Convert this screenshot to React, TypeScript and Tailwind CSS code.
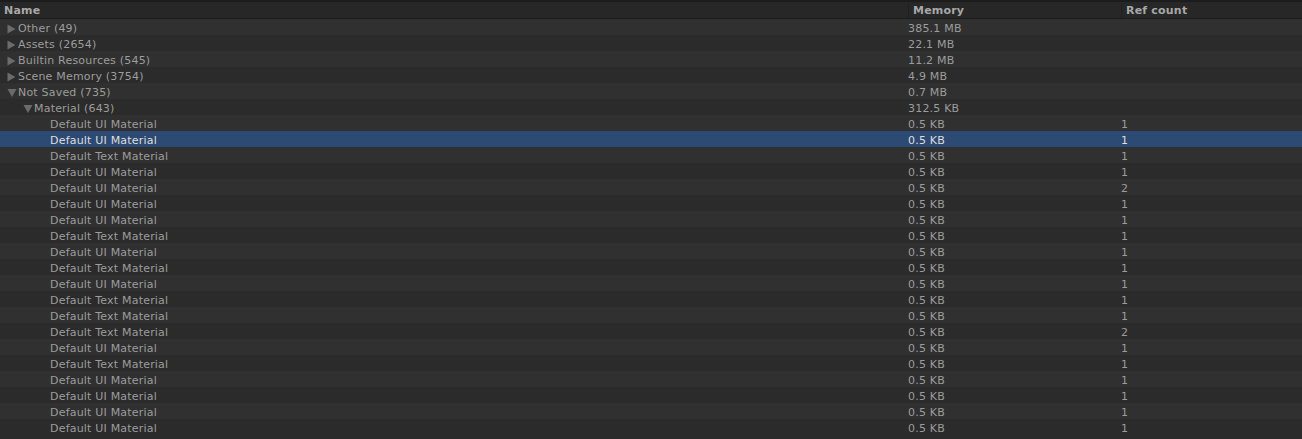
const top = [
  { name: "Other (49)", mem: "385.1 MB" },
  { name: "Assets (2654)", mem: "22.1 MB" },
  { name: "Builtin Resources (545)", mem: "11.2 MB" },
  { name: "Scene Memory (3754)", mem: "4.9 MB" },
];

const leaves: [string, string][] = [
  ["UI", "1"], ["UI", "1"], ["Text", "1"], ["UI", "1"], ["UI", "2"],
  ["UI", "1"], ["UI", "1"], ["Text", "1"], ["UI", "1"], ["Text", "1"],
  ["UI", "1"], ["Text", "1"], ["Text", "1"], ["Text", "2"], ["UI", "1"],
  ["Text", "1"], ["UI", "1"], ["UI", "1"], ["UI", "1"], ["UI", "1"],
];

const Arrow = ({ open }: { open?: boolean }) =>
  open ? (
    <svg width="10" height="8" viewBox="0 0 10 8" className="mr-[1px]">
      <path d="M0.5 0 H9.5 L5 8 Z" fill="#6b6b6b" />
    </svg>
  ) : (
    <svg width="10" height="10" viewBox="0 0 10 10" className="mr-[1px]">
      <path d="M0.5 0.5 L8.5 5 L0.5 9.5 Z" fill="#6b6b6b" />
    </svg>
  );

type RowProps = {
  idx: number;
  depth: number;
  name: string;
  mem: string;
  refs?: string;
  arrow?: "open" | "closed";
  selected?: boolean;
};

const Row = ({ idx, depth, name, mem, refs, arrow, selected }: RowProps) => {
  const bg = selected ? "bg-[#2d4a74]" : idx % 2 === 0 ? "bg-[#303030]" : "bg-[#2b2b2b]";
  const text = selected ? "text-[#dedede]" : "text-[#9c9c9c]";
  return (
    <div className={`flex h-4 items-center pt-[3px] leading-[13px] ${bg} ${text}`}>
      <div className="flex w-[908px] items-center" style={{ paddingLeft: 7 + depth * 16 }}>
        {arrow ? <Arrow open={arrow === "open"} /> : <span className="w-[11px]" />}
        <span>{name}</span>
      </div>
      <div className="w-[213px]">{mem}</div>
      <div className="flex-1">{refs}</div>
    </div>
  );
};

export default function App() {
  return (
    <div className="h-[439px] w-[1302px] overflow-hidden bg-[#2b2b2b] font-['DejaVu_Sans',sans-serif] text-[11px] leading-4 tracking-[0.2px]">
      <div className="h-[2px] bg-[#1c1c1c]" />
      <div className="flex h-[17px] items-center border-b border-[#1a1a1a] bg-[#272727] pt-[1px] font-bold text-[#a8a8a8]">
        <div className="w-[908px] pl-[4px]">Name</div>
        <div className="h-full w-[213px] border-l border-[#202020] pl-[4px] leading-[16px]">Memory</div>
        <div className="h-full flex-1 border-l border-[#202020] pl-[4px] leading-[16px]">Ref count</div>
      </div>
      {top.map((r, i) => (
        <Row key={r.name} idx={i} depth={0} name={r.name} mem={r.mem} arrow="closed" />
      ))}
      <Row idx={4} depth={0} name="Not Saved (735)" mem="0.7 MB" arrow="open" />
      <Row idx={5} depth={1} name="Material (643)" mem="312.5 KB" arrow="open" />
      {leaves.map(([kind, refs], i) => (
        <Row
          key={i}
          idx={6 + i}
          depth={2}
          name={`Default ${kind} Material`}
          mem="0.5 KB"
          refs={refs}
          selected={i === 1}
        />
      ))}
    </div>
  );
}
